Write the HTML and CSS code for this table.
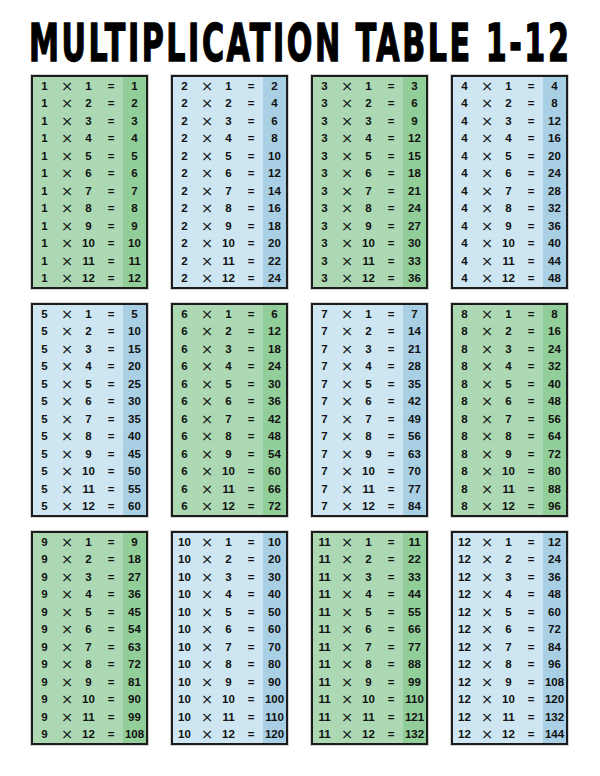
FILE: index.html
```html
<!DOCTYPE html>
<html>
<head>
<meta charset="utf-8">
<link rel="stylesheet" href="styles.css">
</head>
<body>
<header class="head"><h1 class="title">MULTIPLICATION TABLE 1-12</h1></header>
<main class="grid">
<section class="card green">
<div class="r"><span>1</span><span class="x">×</span><span>1</span><span class="q">=</span><span class="v">1</span></div>
<div class="r"><span>1</span><span class="x">×</span><span>2</span><span class="q">=</span><span class="v">2</span></div>
<div class="r"><span>1</span><span class="x">×</span><span>3</span><span class="q">=</span><span class="v">3</span></div>
<div class="r"><span>1</span><span class="x">×</span><span>4</span><span class="q">=</span><span class="v">4</span></div>
<div class="r"><span>1</span><span class="x">×</span><span>5</span><span class="q">=</span><span class="v">5</span></div>
<div class="r"><span>1</span><span class="x">×</span><span>6</span><span class="q">=</span><span class="v">6</span></div>
<div class="r"><span>1</span><span class="x">×</span><span>7</span><span class="q">=</span><span class="v">7</span></div>
<div class="r"><span>1</span><span class="x">×</span><span>8</span><span class="q">=</span><span class="v">8</span></div>
<div class="r"><span>1</span><span class="x">×</span><span>9</span><span class="q">=</span><span class="v">9</span></div>
<div class="r"><span>1</span><span class="x">×</span><span>10</span><span class="q">=</span><span class="v">10</span></div>
<div class="r"><span>1</span><span class="x">×</span><span>11</span><span class="q">=</span><span class="v">11</span></div>
<div class="r"><span>1</span><span class="x">×</span><span>12</span><span class="q">=</span><span class="v">12</span></div>
</section>
<section class="card blue">
<div class="r"><span>2</span><span class="x">×</span><span>1</span><span class="q">=</span><span class="v">2</span></div>
<div class="r"><span>2</span><span class="x">×</span><span>2</span><span class="q">=</span><span class="v">4</span></div>
<div class="r"><span>2</span><span class="x">×</span><span>3</span><span class="q">=</span><span class="v">6</span></div>
<div class="r"><span>2</span><span class="x">×</span><span>4</span><span class="q">=</span><span class="v">8</span></div>
<div class="r"><span>2</span><span class="x">×</span><span>5</span><span class="q">=</span><span class="v">10</span></div>
<div class="r"><span>2</span><span class="x">×</span><span>6</span><span class="q">=</span><span class="v">12</span></div>
<div class="r"><span>2</span><span class="x">×</span><span>7</span><span class="q">=</span><span class="v">14</span></div>
<div class="r"><span>2</span><span class="x">×</span><span>8</span><span class="q">=</span><span class="v">16</span></div>
<div class="r"><span>2</span><span class="x">×</span><span>9</span><span class="q">=</span><span class="v">18</span></div>
<div class="r"><span>2</span><span class="x">×</span><span>10</span><span class="q">=</span><span class="v">20</span></div>
<div class="r"><span>2</span><span class="x">×</span><span>11</span><span class="q">=</span><span class="v">22</span></div>
<div class="r"><span>2</span><span class="x">×</span><span>12</span><span class="q">=</span><span class="v">24</span></div>
</section>
<section class="card green">
<div class="r"><span>3</span><span class="x">×</span><span>1</span><span class="q">=</span><span class="v">3</span></div>
<div class="r"><span>3</span><span class="x">×</span><span>2</span><span class="q">=</span><span class="v">6</span></div>
<div class="r"><span>3</span><span class="x">×</span><span>3</span><span class="q">=</span><span class="v">9</span></div>
<div class="r"><span>3</span><span class="x">×</span><span>4</span><span class="q">=</span><span class="v">12</span></div>
<div class="r"><span>3</span><span class="x">×</span><span>5</span><span class="q">=</span><span class="v">15</span></div>
<div class="r"><span>3</span><span class="x">×</span><span>6</span><span class="q">=</span><span class="v">18</span></div>
<div class="r"><span>3</span><span class="x">×</span><span>7</span><span class="q">=</span><span class="v">21</span></div>
<div class="r"><span>3</span><span class="x">×</span><span>8</span><span class="q">=</span><span class="v">24</span></div>
<div class="r"><span>3</span><span class="x">×</span><span>9</span><span class="q">=</span><span class="v">27</span></div>
<div class="r"><span>3</span><span class="x">×</span><span>10</span><span class="q">=</span><span class="v">30</span></div>
<div class="r"><span>3</span><span class="x">×</span><span>11</span><span class="q">=</span><span class="v">33</span></div>
<div class="r"><span>3</span><span class="x">×</span><span>12</span><span class="q">=</span><span class="v">36</span></div>
</section>
<section class="card blue">
<div class="r"><span>4</span><span class="x">×</span><span>1</span><span class="q">=</span><span class="v">4</span></div>
<div class="r"><span>4</span><span class="x">×</span><span>2</span><span class="q">=</span><span class="v">8</span></div>
<div class="r"><span>4</span><span class="x">×</span><span>3</span><span class="q">=</span><span class="v">12</span></div>
<div class="r"><span>4</span><span class="x">×</span><span>4</span><span class="q">=</span><span class="v">16</span></div>
<div class="r"><span>4</span><span class="x">×</span><span>5</span><span class="q">=</span><span class="v">20</span></div>
<div class="r"><span>4</span><span class="x">×</span><span>6</span><span class="q">=</span><span class="v">24</span></div>
<div class="r"><span>4</span><span class="x">×</span><span>7</span><span class="q">=</span><span class="v">28</span></div>
<div class="r"><span>4</span><span class="x">×</span><span>8</span><span class="q">=</span><span class="v">32</span></div>
<div class="r"><span>4</span><span class="x">×</span><span>9</span><span class="q">=</span><span class="v">36</span></div>
<div class="r"><span>4</span><span class="x">×</span><span>10</span><span class="q">=</span><span class="v">40</span></div>
<div class="r"><span>4</span><span class="x">×</span><span>11</span><span class="q">=</span><span class="v">44</span></div>
<div class="r"><span>4</span><span class="x">×</span><span>12</span><span class="q">=</span><span class="v">48</span></div>
</section>
<section class="card blue">
<div class="r"><span>5</span><span class="x">×</span><span>1</span><span class="q">=</span><span class="v">5</span></div>
<div class="r"><span>5</span><span class="x">×</span><span>2</span><span class="q">=</span><span class="v">10</span></div>
<div class="r"><span>5</span><span class="x">×</span><span>3</span><span class="q">=</span><span class="v">15</span></div>
<div class="r"><span>5</span><span class="x">×</span><span>4</span><span class="q">=</span><span class="v">20</span></div>
<div class="r"><span>5</span><span class="x">×</span><span>5</span><span class="q">=</span><span class="v">25</span></div>
<div class="r"><span>5</span><span class="x">×</span><span>6</span><span class="q">=</span><span class="v">30</span></div>
<div class="r"><span>5</span><span class="x">×</span><span>7</span><span class="q">=</span><span class="v">35</span></div>
<div class="r"><span>5</span><span class="x">×</span><span>8</span><span class="q">=</span><span class="v">40</span></div>
<div class="r"><span>5</span><span class="x">×</span><span>9</span><span class="q">=</span><span class="v">45</span></div>
<div class="r"><span>5</span><span class="x">×</span><span>10</span><span class="q">=</span><span class="v">50</span></div>
<div class="r"><span>5</span><span class="x">×</span><span>11</span><span class="q">=</span><span class="v">55</span></div>
<div class="r"><span>5</span><span class="x">×</span><span>12</span><span class="q">=</span><span class="v">60</span></div>
</section>
<section class="card green">
<div class="r"><span>6</span><span class="x">×</span><span>1</span><span class="q">=</span><span class="v">6</span></div>
<div class="r"><span>6</span><span class="x">×</span><span>2</span><span class="q">=</span><span class="v">12</span></div>
<div class="r"><span>6</span><span class="x">×</span><span>3</span><span class="q">=</span><span class="v">18</span></div>
<div class="r"><span>6</span><span class="x">×</span><span>4</span><span class="q">=</span><span class="v">24</span></div>
<div class="r"><span>6</span><span class="x">×</span><span>5</span><span class="q">=</span><span class="v">30</span></div>
<div class="r"><span>6</span><span class="x">×</span><span>6</span><span class="q">=</span><span class="v">36</span></div>
<div class="r"><span>6</span><span class="x">×</span><span>7</span><span class="q">=</span><span class="v">42</span></div>
<div class="r"><span>6</span><span class="x">×</span><span>8</span><span class="q">=</span><span class="v">48</span></div>
<div class="r"><span>6</span><span class="x">×</span><span>9</span><span class="q">=</span><span class="v">54</span></div>
<div class="r"><span>6</span><span class="x">×</span><span>10</span><span class="q">=</span><span class="v">60</span></div>
<div class="r"><span>6</span><span class="x">×</span><span>11</span><span class="q">=</span><span class="v">66</span></div>
<div class="r"><span>6</span><span class="x">×</span><span>12</span><span class="q">=</span><span class="v">72</span></div>
</section>
<section class="card blue">
<div class="r"><span>7</span><span class="x">×</span><span>1</span><span class="q">=</span><span class="v">7</span></div>
<div class="r"><span>7</span><span class="x">×</span><span>2</span><span class="q">=</span><span class="v">14</span></div>
<div class="r"><span>7</span><span class="x">×</span><span>3</span><span class="q">=</span><span class="v">21</span></div>
<div class="r"><span>7</span><span class="x">×</span><span>4</span><span class="q">=</span><span class="v">28</span></div>
<div class="r"><span>7</span><span class="x">×</span><span>5</span><span class="q">=</span><span class="v">35</span></div>
<div class="r"><span>7</span><span class="x">×</span><span>6</span><span class="q">=</span><span class="v">42</span></div>
<div class="r"><span>7</span><span class="x">×</span><span>7</span><span class="q">=</span><span class="v">49</span></div>
<div class="r"><span>7</span><span class="x">×</span><span>8</span><span class="q">=</span><span class="v">56</span></div>
<div class="r"><span>7</span><span class="x">×</span><span>9</span><span class="q">=</span><span class="v">63</span></div>
<div class="r"><span>7</span><span class="x">×</span><span>10</span><span class="q">=</span><span class="v">70</span></div>
<div class="r"><span>7</span><span class="x">×</span><span>11</span><span class="q">=</span><span class="v">77</span></div>
<div class="r"><span>7</span><span class="x">×</span><span>12</span><span class="q">=</span><span class="v">84</span></div>
</section>
<section class="card green">
<div class="r"><span>8</span><span class="x">×</span><span>1</span><span class="q">=</span><span class="v">8</span></div>
<div class="r"><span>8</span><span class="x">×</span><span>2</span><span class="q">=</span><span class="v">16</span></div>
<div class="r"><span>8</span><span class="x">×</span><span>3</span><span class="q">=</span><span class="v">24</span></div>
<div class="r"><span>8</span><span class="x">×</span><span>4</span><span class="q">=</span><span class="v">32</span></div>
<div class="r"><span>8</span><span class="x">×</span><span>5</span><span class="q">=</span><span class="v">40</span></div>
<div class="r"><span>8</span><span class="x">×</span><span>6</span><span class="q">=</span><span class="v">48</span></div>
<div class="r"><span>8</span><span class="x">×</span><span>7</span><span class="q">=</span><span class="v">56</span></div>
<div class="r"><span>8</span><span class="x">×</span><span>8</span><span class="q">=</span><span class="v">64</span></div>
<div class="r"><span>8</span><span class="x">×</span><span>9</span><span class="q">=</span><span class="v">72</span></div>
<div class="r"><span>8</span><span class="x">×</span><span>10</span><span class="q">=</span><span class="v">80</span></div>
<div class="r"><span>8</span><span class="x">×</span><span>11</span><span class="q">=</span><span class="v">88</span></div>
<div class="r"><span>8</span><span class="x">×</span><span>12</span><span class="q">=</span><span class="v">96</span></div>
</section>
<section class="card green">
<div class="r"><span>9</span><span class="x">×</span><span>1</span><span class="q">=</span><span class="v">9</span></div>
<div class="r"><span>9</span><span class="x">×</span><span>2</span><span class="q">=</span><span class="v">18</span></div>
<div class="r"><span>9</span><span class="x">×</span><span>3</span><span class="q">=</span><span class="v">27</span></div>
<div class="r"><span>9</span><span class="x">×</span><span>4</span><span class="q">=</span><span class="v">36</span></div>
<div class="r"><span>9</span><span class="x">×</span><span>5</span><span class="q">=</span><span class="v">45</span></div>
<div class="r"><span>9</span><span class="x">×</span><span>6</span><span class="q">=</span><span class="v">54</span></div>
<div class="r"><span>9</span><span class="x">×</span><span>7</span><span class="q">=</span><span class="v">63</span></div>
<div class="r"><span>9</span><span class="x">×</span><span>8</span><span class="q">=</span><span class="v">72</span></div>
<div class="r"><span>9</span><span class="x">×</span><span>9</span><span class="q">=</span><span class="v">81</span></div>
<div class="r"><span>9</span><span class="x">×</span><span>10</span><span class="q">=</span><span class="v">90</span></div>
<div class="r"><span>9</span><span class="x">×</span><span>11</span><span class="q">=</span><span class="v">99</span></div>
<div class="r"><span>9</span><span class="x">×</span><span>12</span><span class="q">=</span><span class="v">108</span></div>
</section>
<section class="card blue">
<div class="r"><span>10</span><span class="x">×</span><span>1</span><span class="q">=</span><span class="v">10</span></div>
<div class="r"><span>10</span><span class="x">×</span><span>2</span><span class="q">=</span><span class="v">20</span></div>
<div class="r"><span>10</span><span class="x">×</span><span>3</span><span class="q">=</span><span class="v">30</span></div>
<div class="r"><span>10</span><span class="x">×</span><span>4</span><span class="q">=</span><span class="v">40</span></div>
<div class="r"><span>10</span><span class="x">×</span><span>5</span><span class="q">=</span><span class="v">50</span></div>
<div class="r"><span>10</span><span class="x">×</span><span>6</span><span class="q">=</span><span class="v">60</span></div>
<div class="r"><span>10</span><span class="x">×</span><span>7</span><span class="q">=</span><span class="v">70</span></div>
<div class="r"><span>10</span><span class="x">×</span><span>8</span><span class="q">=</span><span class="v">80</span></div>
<div class="r"><span>10</span><span class="x">×</span><span>9</span><span class="q">=</span><span class="v">90</span></div>
<div class="r"><span>10</span><span class="x">×</span><span>10</span><span class="q">=</span><span class="v">100</span></div>
<div class="r"><span>10</span><span class="x">×</span><span>11</span><span class="q">=</span><span class="v">110</span></div>
<div class="r"><span>10</span><span class="x">×</span><span>12</span><span class="q">=</span><span class="v">120</span></div>
</section>
<section class="card green">
<div class="r"><span>11</span><span class="x">×</span><span>1</span><span class="q">=</span><span class="v">11</span></div>
<div class="r"><span>11</span><span class="x">×</span><span>2</span><span class="q">=</span><span class="v">22</span></div>
<div class="r"><span>11</span><span class="x">×</span><span>3</span><span class="q">=</span><span class="v">33</span></div>
<div class="r"><span>11</span><span class="x">×</span><span>4</span><span class="q">=</span><span class="v">44</span></div>
<div class="r"><span>11</span><span class="x">×</span><span>5</span><span class="q">=</span><span class="v">55</span></div>
<div class="r"><span>11</span><span class="x">×</span><span>6</span><span class="q">=</span><span class="v">66</span></div>
<div class="r"><span>11</span><span class="x">×</span><span>7</span><span class="q">=</span><span class="v">77</span></div>
<div class="r"><span>11</span><span class="x">×</span><span>8</span><span class="q">=</span><span class="v">88</span></div>
<div class="r"><span>11</span><span class="x">×</span><span>9</span><span class="q">=</span><span class="v">99</span></div>
<div class="r"><span>11</span><span class="x">×</span><span>10</span><span class="q">=</span><span class="v">110</span></div>
<div class="r"><span>11</span><span class="x">×</span><span>11</span><span class="q">=</span><span class="v">121</span></div>
<div class="r"><span>11</span><span class="x">×</span><span>12</span><span class="q">=</span><span class="v">132</span></div>
</section>
<section class="card blue">
<div class="r"><span>12</span><span class="x">×</span><span>1</span><span class="q">=</span><span class="v">12</span></div>
<div class="r"><span>12</span><span class="x">×</span><span>2</span><span class="q">=</span><span class="v">24</span></div>
<div class="r"><span>12</span><span class="x">×</span><span>3</span><span class="q">=</span><span class="v">36</span></div>
<div class="r"><span>12</span><span class="x">×</span><span>4</span><span class="q">=</span><span class="v">48</span></div>
<div class="r"><span>12</span><span class="x">×</span><span>5</span><span class="q">=</span><span class="v">60</span></div>
<div class="r"><span>12</span><span class="x">×</span><span>6</span><span class="q">=</span><span class="v">72</span></div>
<div class="r"><span>12</span><span class="x">×</span><span>7</span><span class="q">=</span><span class="v">84</span></div>
<div class="r"><span>12</span><span class="x">×</span><span>8</span><span class="q">=</span><span class="v">96</span></div>
<div class="r"><span>12</span><span class="x">×</span><span>9</span><span class="q">=</span><span class="v">108</span></div>
<div class="r"><span>12</span><span class="x">×</span><span>10</span><span class="q">=</span><span class="v">120</span></div>
<div class="r"><span>12</span><span class="x">×</span><span>11</span><span class="q">=</span><span class="v">132</span></div>
<div class="r"><span>12</span><span class="x">×</span><span>12</span><span class="q">=</span><span class="v">144</span></div>
</section>
</main>
</body>
</html>
```

FILE: styles.css
```css
html, body {
  margin: 0;
  padding: 0;
  background: #ffffff;
}
body {
  width: 600px;
  height: 776px;
  overflow: hidden;
  font-family: "Liberation Sans", Arial, sans-serif;
  color: #111;
}
.head {
  height: 75px;
  display: flex;
  justify-content: center;
  align-items: flex-start;
}
.title {
  margin: 0;
  padding-top: 17px;
  font-family: "DejaVu Sans Condensed", "DejaVu Sans", sans-serif;
  font-weight: 700;
  font-size: 52px;
  line-height: 52px;
  letter-spacing: 4px;
  white-space: nowrap;
  color: #000;
  -webkit-text-stroke: 1.4px #000;
  transform: scaleX(0.644);
  transform-origin: center top;
}
.grid {
  display: grid;
  grid-template-columns: repeat(4, 117px);
  grid-auto-rows: 214px;
  column-gap: 23px;
  row-gap: 14px;
  margin-left: 31px;
}
.card {
  box-sizing: border-box;
  border: 2px solid #1c1c1c;
  box-shadow: 0 0 0 1px rgba(0, 0, 0, 0.18);
  display: grid;
  grid-template-rows: repeat(12, minmax(0, 1fr));
  overflow: hidden;
}
.green { background: #acd9b3; }
.green .v { background: #92ce99; }
.blue { background: #cde6f2; }
.blue .v { background: #a9cfe5; }
.r {
  min-height: 0;
  display: grid;
  grid-template-columns: 23px 22px 21px 24px 23px;
  align-items: stretch;
  font-size: 11.5px;
  line-height: 12px;
  font-weight: 700;
}
.r span {
  display: flex;
  align-items: center;
  justify-content: center;
  min-height: 0;
}
.r .x {
  font-family: "DejaVu Sans", sans-serif;
  font-weight: 400;
  font-size: 14.5px;
  line-height: 12px;
  color: #111;
}
```
